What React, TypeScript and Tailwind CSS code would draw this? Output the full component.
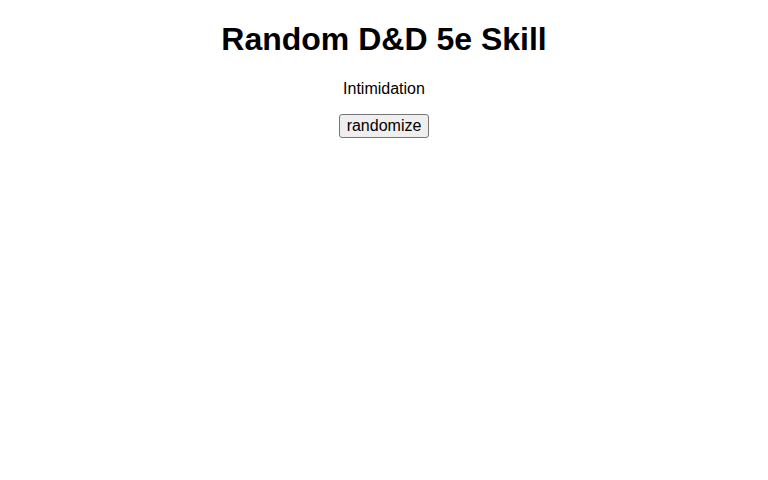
import React, { useState } from 'react';

const skills = [
  'Acrobatics',
  'Animal Handling',
  'Arcana',
  'Athletics',
  'Deception',
  'History',
  'Insight',
  'Intimidation',
  'Investigation',
  'Medicine',
  'Nature',
  'Perception',
  'Performance',
  'Persuasion',
  'Religion',
  'Sleight of Hand',
  'Stealth',
  'Survival',
];

export default function App() {
  const [skill, setSkill] = useState('Intimidation');

  const randomize = () => {
    setSkill(skills[Math.floor(Math.random() * skills.length)]);
  };

  return (
    <div className="text-center text-black bg-white font-['Liberation_Sans',Arial,sans-serif]">
      <h1 className="text-[32px] font-bold leading-[37px] pt-[21px] mb-[22px]">Random D&amp;D 5e Skill</h1>
      <p className="text-base leading-[18px] mb-4">{skill}</p>
      <button
        onClick={randomize}
        className="text-base leading-[18px] px-[7px] py-[2px] bg-[#efefef] border border-[#767676] rounded-[3px] text-black"
      >
        randomize
      </button>
    </div>
  );
}
